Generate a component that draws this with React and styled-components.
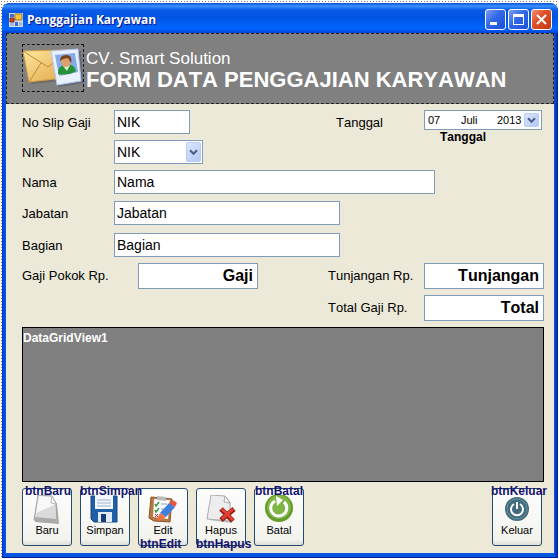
import React from 'react'
import styled, { createGlobalStyle } from 'styled-components'

const GlobalStyle = createGlobalStyle`
  * {
    box-sizing: border-box;
  }
  body {
    margin: 0;
    background: radial-gradient(circle, #777 1px, transparent 1px) 0 0 / 3px 3px #fff;
    font-family: "Liberation Sans", Arial, sans-serif;
    font-kerning: none;
    color: #000;
  }
  input, button, select {
    font-family: inherit;
    font-kerning: none;
    color: inherit;
    margin: 0;
  }
`
const Page = styled.div`
  padding: 3px 1px 1px 2px;
`
const Window = styled.main`
  padding: 0 4px 4px;
  border-radius: 8px 8px 0 0;
  background: linear-gradient(90deg, #0831d9, #0855dd 3px, #0855dd calc(100% - 4px), #001ea0);
  border-bottom: 1px solid #001ea0;
`
const TitleBar = styled.header`
  display: flex;
  align-items: center;
  gap: 4px;
  height: 30px;
  margin: 0 -4px;
  padding: 3px 6px 0 7px;
  border-radius: 8px 8px 0 0;
  background: linear-gradient(#0a4fd0, #3a90ff 3px, #0a5ae8 7px, #0054e3 14px, #0066ff 26px, #003dd7);
`
const Title = styled.h1`
  flex: 1;
  margin: 0;
  color: #fff;
  font: bold 12px "Open Sans", sans-serif;
  text-shadow: 1px 1px #0f1089;
`
const Controls = styled.div`
  display: flex;
  gap: 2px;
`
const ControlButton = styled.button`
  display: flex;
  width: 21px;
  height: 21px;
  padding: 0;
  border: 1px solid #fff;
  border-radius: 3px;
  background: ${(p) => (p.$close ? 'linear-gradient(135deg, #ee9272, #e0502c 40%, #c03812)' : 'linear-gradient(135deg, #7b9ff2, #3168e8 45%, #1d4fd8)')};
`
const Banner = styled.section`
  display: flex;
  gap: 2px;
  height: 71px;
  padding: 10px 15px;
  border: 1px dashed #222;
  background: #808080;
  color: #fff;
`
const Logo = styled.div`
  width: 62px;
  height: 48px;
  border: 1px dashed #111;
`
const Company = styled.p`
  margin: 6px 0 0;
  font-size: 17px;
  line-height: 18px;
`
const Heading = styled.h2`
  margin: 0;
  font-size: 22px;
  line-height: 24px;
`
const Body = styled.form`
  padding: 6px 10px 7px 16px;
  background: #ece9d8;
`
const Fields = styled.div`
  display: grid;
  gap: ${(p) => p.$gap}px;
  margin-bottom: ${(p) => p.$after}px;
`
const Row = styled.div`
  display: flex;
  height: ${(p) => (p.$tall ? 26 : 24)}px;
`
const Label = styled.label`
  flex: none;
  width: ${(p) => p.$width}px;
  font-size: 13px;
  line-height: 26px;
`
const TextField = styled.input`
  width: ${(p) => p.$width}px;
  padding: 0 2px;
  border: 1px solid #7f9db9;
  background: #fff;
  font-size: 14px;
`
const MoneyField = styled(TextField)`
  width: 120px;
  padding: 0 4px;
  font-size: 16px;
  font-weight: bold;
  text-align: right;
`
const RightSide = styled.div`
  display: flex;
  margin-left: auto;
`
const Combo = styled.div`
  display: flex;
  align-items: center;
  width: 89px;
  padding: 1px;
  border: 1px solid #7f9db9;
  background: #fff;
`
const Select = styled.select`
  flex: 1;
  min-width: 0;
  height: 20px;
  padding: 0 1px;
  border: 0;
  appearance: none;
  background: none;
  font-size: 14px;
`
const Arrow = styled.button`
  display: flex;
  align-items: center;
  justify-content: center;
  flex: none;
  width: 15px;
  height: ${(p) => p.$height}px;
  padding: 0;
  border: 1px solid #b9cbf3;
  border-radius: 2px;
  background: linear-gradient(135deg, #dce6fe, #b4c8f6);
`
const DateColumn = styled.div`
  width: 120px;
`
const DateBox = styled.div`
  display: flex;
  align-items: center;
  justify-content: space-between;
  width: 118px;
  height: 20px;
  padding: 0 2px 0 3px;
  border: 1px solid #7f9db9;
  background: #fff;
`
const DatePart = styled.input`
  width: ${(p) => p.$width}px;
  padding: 0;
  border: 0;
  background: none;
  font-size: 11px;
`
const FieldName = styled.div`
  padding-left: 16px;
  font-size: 12px;
  font-weight: bold;
  line-height: 14px;
`
const DataGrid = styled.section`
  height: 155px;
  padding-top: 3px;
  border: 1px solid #000;
  background: #808080;
  color: #fff;
  font-size: 12px;
  font-weight: bold;
  line-height: 14px;
`
const Toolbar = styled.div`
  display: flex;
  gap: 8px;
  padding: 6px 2px 0 0;
`
const ToolButton = styled.button`
  position: relative;
  display: flex;
  flex-direction: column;
  align-items: center;
  justify-content: flex-end;
  width: 50px;
  height: 58px;
  padding: 0 0 8px;
  border: 1px solid #244a70;
  border-radius: 3px;
  background: linear-gradient(#fdfdfc, #f3f3ee 90%, #e0ded6);
  font-size: 11px;
  line-height: 13px;
  &:last-child {
    margin-left: auto;
  }
`
const ControlName = styled.span`
  position: absolute;
  z-index: 1;
  left: ${(p) => p.$left}px;
  ${(p) => (p.$below ? 'bottom: -6px' : 'top: -5px')};
  color: #14146e;
  font-size: 12px;
  font-weight: bold;
  line-height: 14px;
`

const Chevron = () => (
  <svg width="9" height="7" viewBox="0 0 9 7" aria-hidden="true">
    <path d="M1 1.2 4.5 4.7 8 1.2" fill="none" stroke="#4d6185" strokeWidth="2.2" />
  </svg>
)

const AppIcon = () => (
  <svg width="14" height="14" viewBox="0 0 14 14" aria-hidden="true">
    <path d="M0 0h14v14H0z" fill="#d8dde8" />
    <path d="M1 1h4v3H1z" fill="#3b6dd0" />
    <path d="M6 1h7v6H6z" fill="#f3c63c" stroke="#8d7a3c" />
    <path d="M1 5h4v4H1z" fill="#d0432c" stroke="#842415" />
    <path d="M1 10h4v3H1zM10 9h3v4h-3z" fill="#a9b8d8" />
    <path d="M6 9h3v4H6z" fill="#326fe0" />
  </svg>
)

const MailPhoto = () => (
  <svg width="60" height="46" viewBox="0 0 60 46" aria-hidden="true">
    <defs>
      <linearGradient id="mail" x2="1" y2="1">
        <stop stopColor="#ffe9a0" />
        <stop offset="1" stopColor="#dfa243" />
      </linearGradient>
    </defs>
    <path d="m3 10 42-4 4 29-41 4z" fill="#594d3b" opacity=".4" />
    <path d="m0 6 45-1 4 27-43 5z" fill="url(#mail)" stroke="#d2a048" />
    <path d="m0 6 25 16L45 5M6 37l12-19" fill="none" stroke="#bd8a35" />
    <path d="m30 8 28-2 2 32-25 4z" fill="#4a5168" opacity=".5" />
    <path d="m28 6 27-2 3 32-24 4z" fill="#e9f0ff" stroke="#b3c6f2" />
    <path d="m32 10 20-2 3 19-19 4z" fill="#86abe8" />
    <path d="M35 29q-1-8 7-9 9-2 11 6-7 5-18 3" fill="#269238" />
    <path d="m40 21 4 5 3-6z" fill="#d6f0d0" />
    <ellipse cx="43" cy="16" rx="5" ry="6" fill="#dda06c" />
    <path d="M37 16q0-6 6-6 7 0 5 8l-3-5-5 1z" fill="#77401d" />
  </svg>
)

const Icons = {
  Baru: (
    <>
      <path d="m7 1 13 1 5 7 2 20-24-2z" fill="#777" opacity=".6" />
      <path d="m6 0 14 1 4 7 1 19-23-2z" fill="#dadada" stroke="#a0a0a0" />
      <path d="m7 1 12 1 3 8-18 8z" fill="#f8f8f8" />
      <path d="m20 1-1 7 5 1z" fill="#fff" stroke="#bbb" />
      <path d="m3 22 21 2v3L2 25z" fill="#aaa" />
    </>
  ),
  Simpan: (
    <>
      <path d="M1 1h26v26H4l-3-3z" fill="#1f5fa8" stroke="#174780" />
      <path d="M5 0h18v14H5z" fill="#f4f8fd" />
      <path d="M7 5h14M7 8h14M7 11h14" stroke="#9bafca" />
      <path d="M8 17h14v10H8z" fill="#e1eaf5" />
      <path d="M11 19h5v8h-5z" fill="#173e78" />
    </>
  ),
  Edit: (
    <>
      <path d="m3 2 21 2-2 23-16-1-5-3z" fill="#b87740" stroke="#8d552b" />
      <path d="m6 4 16 1-2 19-15-2z" fill="#f9fbff" />
      <path d="m9 1 9 1v4L9 5z" fill="#bbb" />
      <path d="m7 9 1 2 3-4M7 15l1 2 3-4" fill="none" stroke="#37a13d" strokeWidth="1.5" />
      <path d="m7 19 3 3m0-3-3 3" stroke="#bf2929" />
      <path d="M13 9h6m-6 5h5" stroke="#91a2ba" />
      <path d="m12 18 9-10 6 4-9 10z" fill="#3f7fda" />
      <path d="m12 18-3 6 2 2 7-4z" fill="#ec7049" />
      <path d="m21 8 4-3 4 3-2 4z" fill="#e75542" />
    </>
  ),
  Hapus: (
    <>
      <path d="m6 1 13 1 5 6 1 20-22-3z" fill="#999" opacity=".6" />
      <path d="m5 0 14 1 5 6v19L1 24z" fill="#ededf0" stroke="#acacb1" />
      <path d="m19 1-1 6 6 1z" fill="#fff" stroke="#aaa" />
      <path d="m15 14 12 12m1-12L15 25" stroke="#931d18" strokeWidth="5" />
      <path d="m16 14 11 11m0-11L16 24" stroke="#e24136" strokeWidth="3" />
    </>
  ),
  Batal: (
    <>
      <circle cx="15" cy="13" r="14" fill="#629b29" />
      <circle cx="15" cy="12" r="12" fill="#7fb544" />
      <path d="M11 6a8 8 0 1 0 9 1" fill="none" stroke="#fff" strokeWidth="3" />
      <path d="m12 1 7 4-6 6z" fill="#fff" />
    </>
  ),
  Keluar: (
    <>
      <circle cx="15" cy="14" r="12" fill="#416c7d" />
      <circle cx="15" cy="14" r="10" fill="none" stroke="#6a919e" />
      <path d="M12 9a6 6 0 1 0 6 0M15 7v7" fill="none" stroke="#fff" strokeWidth="2" />
    </>
  ),
}

const buttons = [
  { text: 'Baru', left: 2 },
  { text: 'Simpan', left: -1 },
  { text: 'Edit', left: 1, below: true },
  { text: 'Hapus', left: -1, below: true },
  { text: 'Batal', left: 0 },
  { text: 'Keluar', left: -2 },
]

function App() {
  return (
    <Page>
      <GlobalStyle />
      <Window>
        <TitleBar>
          <AppIcon />
          <Title>Penggajian Karyawan</Title>
          <Controls>
            <ControlButton aria-label="Minimize">
              <svg width="19" height="19"><path d="M4 12h7v3H4z" fill="#fff" /></svg>
            </ControlButton>
            <ControlButton aria-label="Maximize">
              <svg width="19" height="19"><path d="M4 4h11v11H4zM5 7v7h9V7z" fill="#fff" fillRule="evenodd" /></svg>
            </ControlButton>
            <ControlButton $close aria-label="Close">
              <svg width="19" height="19"><path d="m5 5 9 9m0-9-9 9" stroke="#fff" strokeWidth="2" /></svg>
            </ControlButton>
          </Controls>
        </TitleBar>
        <Banner>
          <Logo><MailPhoto /></Logo>
          <div>
            <Company>CV. Smart Solution</Company>
            <Heading>FORM DATA PENGGAJIAN KARYAWAN</Heading>
          </div>
        </Banner>
        <Body onSubmit={(e) => e.preventDefault()}>
          <Fields $gap={6} $after={7}>
            <Row>
              <Label $width={92} htmlFor="slip">No Slip Gaji</Label>
              <TextField id="slip" $width={76} defaultValue="NIK" />
              <RightSide>
                <Label $width={88} htmlFor="hari">Tanggal</Label>
                <DateColumn>
                  <DateBox>
                    <DatePart id="hari" $width={33} defaultValue="07" />
                    <DatePart aria-label="Bulan" $width={36} defaultValue="Juli" />
                    <DatePart aria-label="Tahun" $width={27} defaultValue="2013" />
                    <Arrow type="button" $height={14} aria-label="Pilih tanggal"><Chevron /></Arrow>
                  </DateBox>
                  <FieldName>Tanggal</FieldName>
                </DateColumn>
              </RightSide>
            </Row>
            <Row>
              <Label $width={92} htmlFor="nik">NIK</Label>
              <Combo>
                <Select id="nik"><option>NIK</option></Select>
                <Arrow type="button" $height={20} aria-label="Buka daftar NIK"><Chevron /></Arrow>
              </Combo>
            </Row>
            <Row>
              <Label $width={92} htmlFor="nama">Nama</Label>
              <TextField id="nama" $width={321} defaultValue="Nama" />
            </Row>
          </Fields>
          <Fields $gap={8} $after={6}>
            <Row>
              <Label $width={92} htmlFor="jabatan">Jabatan</Label>
              <TextField id="jabatan" $width={226} defaultValue="Jabatan" />
            </Row>
            <Row>
              <Label $width={92} htmlFor="bagian">Bagian</Label>
              <TextField id="bagian" $width={226} defaultValue="Bagian" />
            </Row>
          </Fields>
          <Fields $gap={6} $after={6}>
            <Row $tall>
              <Label $width={116} htmlFor="gaji">Gaji Pokok Rp.</Label>
              <MoneyField id="gaji" defaultValue="Gaji" />
              <RightSide>
                <Label $width={96} htmlFor="tunjangan">Tunjangan Rp.</Label>
                <MoneyField id="tunjangan" defaultValue="Tunjangan" />
              </RightSide>
            </Row>
            <Row $tall>
              <RightSide>
                <Label $width={96} htmlFor="total">Total Gaji Rp.</Label>
                <MoneyField id="total" defaultValue="Total" />
              </RightSide>
            </Row>
          </Fields>
          <DataGrid>DataGridView1</DataGrid>
          <Toolbar>
            {buttons.map((b) => (
              <ToolButton key={b.text} type="button">
                <svg width="30" height="29" viewBox="0 0 30 29" aria-hidden="true">{Icons[b.text]}</svg>
                {b.text}
                <ControlName $left={b.left} $below={b.below}>btn{b.text}</ControlName>
              </ToolButton>
            ))}
          </Toolbar>
        </Body>
      </Window>
    </Page>
  )
}

export default App
